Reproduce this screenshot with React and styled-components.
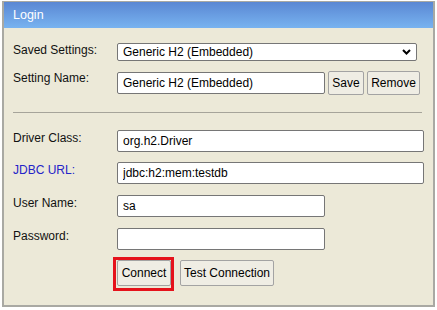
import React from "react";
import styled, { createGlobalStyle } from "styled-components";

const Global = createGlobalStyle`
  html, body { margin: 0; padding: 0; background: #ffffff; }
  body { font-family: "Liberation Sans", Arial, sans-serif; font-size: 12px; color: #000; }
  * { box-sizing: border-box; }
`;

const Panel = styled.div`
  margin: 1px 2px;
  width: 433px;
  border: 2px solid #a9a9a3;
  border-top-width: 1px;
  display: flex;
  flex-direction: column;
`;

const Header = styled.div`
  height: 26px;
  line-height: 26px;
  padding-left: 9px;
  color: #ffffff;
  font-size: 12.5px;
  background: linear-gradient(#5a87d3, #78b3f0);
`;

const Body = styled.div`
  background: #ece9d8;
  padding: 15px 9px 19px 9px;
  display: flex;
  flex-direction: column;
`;

const Row = styled.div`
  display: flex;
  align-items: flex-start;
  height: ${(p) => p.$h}px;
  margin-bottom: ${(p) => p.$mb || 0}px;
`;

const Label = styled.div`
  width: 104px;
  flex: none;
  line-height: 14px;
  padding-top: ${(p) => p.$pt ?? 1}px;
  color: ${(p) => (p.$link ? "#2424c8" : "#111")};
`;

const Field = styled.div`
  display: flex;
  align-items: center;
  gap: 3px;
  height: 100%;
`;

const Input = styled.input`
  width: ${(p) => p.$w}px;
  height: 22px;
  border: 1px solid #767676;
  border-radius: 2px;
  background: #fff;
  padding: 0 5px;
  font-family: "Liberation Sans", Arial, sans-serif;
  font-size: 12px;
  color: #000;
  outline: none;
  margin: 0;
`;

const SelectWrap = styled.div`
  position: relative;
  width: 300px;
  height: 18px;
`;

const Select = styled.select`
  appearance: none;
  width: 100%;
  height: 100%;
  border: 1px solid #767676;
  border-radius: 2px;
  background: #fff;
  padding: 0 5px;
  font-family: "Liberation Sans", Arial, sans-serif;
  font-size: 12px;
  color: #000;
  outline: none;
  margin: 0;
`;

const Chevron = styled.svg`
  position: absolute;
  right: 6px;
  top: 6px;
  pointer-events: none;
`;

const Button = styled.button`
  width: ${(p) => p.$w}px;
  height: ${(p) => p.$h}px;
  border: 1px solid #a3a3a3;
  border-radius: 2px;
  background: #efede4;
  font-family: "Liberation Sans", Arial, sans-serif;
  font-size: 12px;
  color: #000;
  padding: 0;
  margin: 0;
`;

const Rule = styled.div`
  height: 1px;
  background: #a6a49a;
  margin: 17px 2px 17px 0;
`;

const Actions = styled.div`
  display: flex;
  align-items: flex-start;
  gap: 9px;
  padding-left: 104px;
  height: 26px;
`;

const Highlight = styled.div`
  position: relative;
  display: flex;
  &::after {
    content: "";
    position: absolute;
    left: -4px;
    top: -3px;
    right: -3px;
    bottom: -5px;
    border: 3px solid #e5121b;
    pointer-events: none;
  }
`;

export default function App() {
  return (
    <>
      <Global />
      <Panel>
        <Header>Login</Header>
        <Body>
          <Row $h={18} $mb={10}>
            <Label $pt={0}>Saved Settings:</Label>
            <SelectWrap>
              <Select defaultValue="h2">
                <option value="h2">Generic H2 (Embedded)</option>
              </Select>
              <Chevron width="9" height="6" viewBox="0 0 9 6">
                <path d="M1 1 L4.5 4.5 L8 1" fill="none" stroke="#000" strokeWidth="2" />
              </Chevron>
            </SelectWrap>
          </Row>
          <Row $h={24}>
            <Label $pt={0}>Setting Name:</Label>
            <Field>
              <Input $w={208} defaultValue="Generic H2 (Embedded)" />
              <Button $w={36} $h={24}>Save</Button>
              <Button $w={53} $h={24}>Remove</Button>
            </Field>
          </Row>
          <Rule />
          <Row $h={22} $mb={10}>
            <Label>Driver Class:</Label>
            <Input $w={308} defaultValue="org.h2.Driver" />
          </Row>
          <Row $h={22} $mb={11}>
            <Label $link>JDBC URL:</Label>
            <Input $w={308} defaultValue="jdbc:h2:mem:testdb" />
          </Row>
          <Row $h={22} $mb={11}>
            <Label>User Name:</Label>
            <Input $w={208} defaultValue="sa" />
          </Row>
          <Row $h={22} $mb={10}>
            <Label>Password:</Label>
            <Input $w={208} type="password" defaultValue="" />
          </Row>
          <Actions>
            <Highlight>
              <Button $w={54} $h={26}>Connect</Button>
            </Highlight>
            <Button $w={94} $h={26}>Test Connection</Button>
          </Actions>
        </Body>
      </Panel>
    </>
  );
}
